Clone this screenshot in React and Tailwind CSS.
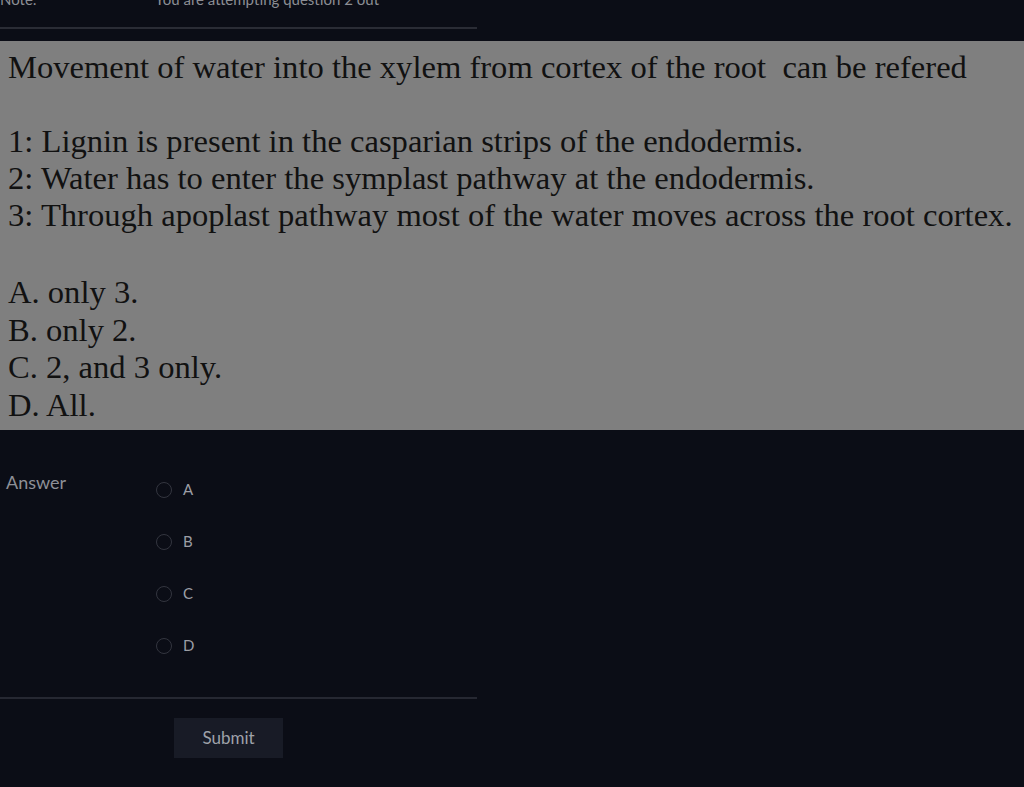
export default function App() {
  const statements = [
    "1: Lignin is present in the casparian strips of the endodermis.",
    "2: Water has to enter the symplast pathway at the endodermis.",
    "3: Through apoplast pathway most of the water moves across the root cortex.",
  ]
  const options = ["A. only 3.", "B. only 2.", "C. 2, and 3 only.", "D. All."]
  const choices = ["A", "B", "C", "D"]

  return (
    <div className="min-h-[787px] w-[1024px] overflow-hidden bg-[#0b0d16]" style={{ fontFamily: "Lato, 'Open Sans', sans-serif" }}>
      {/* header remnants, mostly scrolled out of view */}
      <div className="w-[477px] h-[29px] border-b-2 border-[#2a2c35] relative">
        <div className="absolute top-[-12px] left-0 flex text-[15px] text-[#8b8d94]">
          <span className="w-[155px]">Note:</span>
          <span>You are attempting question 2 out</span>
        </div>
      </div>

      {/* question box */}
      <div className="mt-[12px] bg-[#7f7f7f] h-[389px] pl-[8px] pt-[8px] text-[#111] text-[32.6px] leading-[37px]" style={{ fontFamily: "'Liberation Serif', 'Times New Roman', serif" }}>
        <p className="whitespace-pre">Movement of water into the xylem from cortex of the root  can be refered</p>
        <div className="mt-[37px]">
          {statements.map((s) => (
            <p key={s} className="whitespace-nowrap">{s}</p>
          ))}
        </div>
        <div className="mt-[40px] leading-[37.6px]">
          {options.map((o) => (
            <p key={o} className="whitespace-nowrap">{o}</p>
          ))}
        </div>
      </div>

      {/* answer section */}
      <div className="flex pt-[40px] w-[477px]">
        <div className="w-[156px] pl-[6px] text-[18px] text-[#8e9097] leading-[24px]">Answer</div>
        <div className="flex flex-col gap-[37px] pt-[12px]">
          {choices.map((c) => (
            <label key={c} className="flex items-center gap-[11px] h-[15px]">
              <span className="w-[16px] h-[16px] rounded-full border border-[#33353f]" />
              <span className="text-[15px] text-[#9c9ea5]">{c}</span>
            </label>
          ))}
        </div>
      </div>

      <div className="w-[477px] mt-[44px] border-b-2 border-[#262832]" />

      <div className="pl-[174px] pt-[19px]">
        <button className="w-[109px] h-[40px] bg-[#181b26] text-[#9fa2a9] text-[17px]">Submit</button>
      </div>
    </div>
  )
}
